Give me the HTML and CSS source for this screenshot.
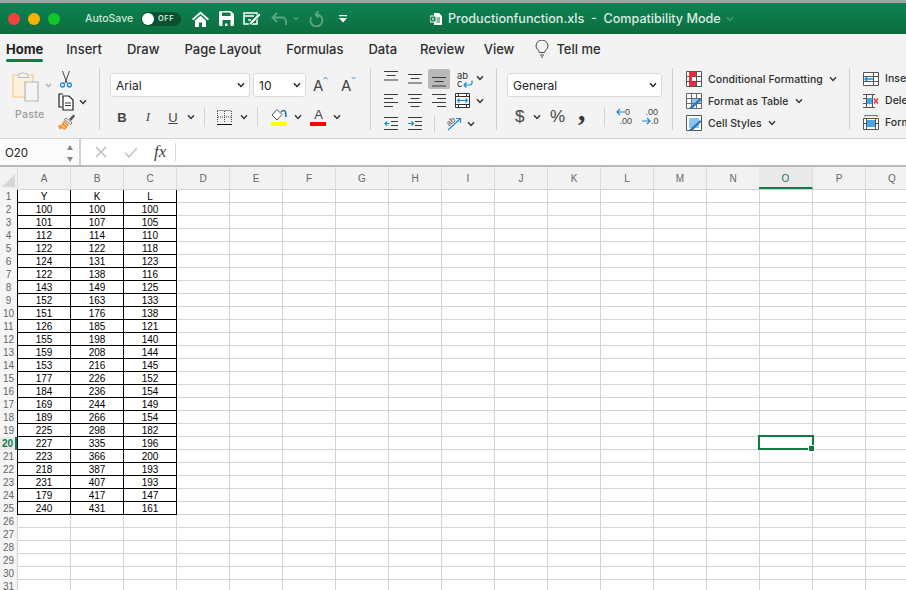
FILE: index.html
```html
<!DOCTYPE html>
<html lang="en">
<head>
<meta charset="utf-8">
<title>Productionfunction.xls</title>
<link rel="stylesheet" href="styles.css">
</head>
<body>
<svg class="defs" width="0" height="0" aria-hidden="true">
  <symbol id="chev" viewBox="0 0 8 6"><path d="M1 1.200 4 4.400 7 1.200" fill="none" stroke="currentColor" stroke-width="1.400"/></symbol>
</svg>
<div class="app">
  <header class="titlebar">
    <div class="lights"><i class="light red"></i><i class="light yellow"></i><i class="light green"></i></div>
    <span class="autosave">AutoSave</span>
    <span class="toggle"><i class="knob"></i><b>OFF</b></span>
    <svg class="qa qa-home" width="17" height="16" viewBox="0 0 17 16"><path d="M8.500 .5 0 8l1.200 1.300L8.500 3l7.300 6.300L17 8ZM3 9.500V16h4v-4.500h3V16h4V9.500L8.500 4.800Z" fill="#fff"/></svg>
    <svg class="qa qa-save" width="15" height="15" viewBox="0 0 15 15"><path fill="#fff" d="M0 1.500A1.500 1.500 0 0 1 1.500 0h10L15 3v10.500A1.500 1.500 0 0 1 13.500 15h-12A1.500 1.500 0 0 1 0 13.500ZM3 1.500V5h8.500V1.500ZM3.500 9v6H6v-2.500h2.500V15h3V9Z"/></svg>
    <svg class="qa qa-edit" width="19" height="15" viewBox="0 0 19 15"><path d="M1 2h13v11H1ZM1 5h10M5 9h3" fill="none" stroke="#fff" stroke-width="1.500"/><path d="M7 11 16 2l2 2-9 9-3 1Z" fill="#fff" stroke="#0c7545" stroke-width=".8"/></svg>
    <svg class="qa qa-undo" width="17" height="14" viewBox="0 0 17 14"><path d="M6 1 1.500 5.500 6 10M2 5.500h9a4 4 0 0 1 4 4V13" fill="none" stroke="#5fa687" stroke-width="1.800"/></svg>
    <svg class="qa qa-chev" width="6" height="5"><use href="#chev" color="#5fa687"/></svg>
    <svg class="qa qa-redo" width="15" height="16" viewBox="0 0 15 16"><path d="M8 3.500a6 6 0 1 1-5.500 2.500M9.500 0 6.500 3.500l3 3" fill="none" stroke="#5fa687" stroke-width="1.800"/></svg>
    <svg class="qa qa-more" width="8" height="8" viewBox="0 0 8 8"><path d="M0 0h8v1.300H0ZM0 3h8L4 7.500Z" fill="#fff"/></svg>
    <div class="doc">
      <svg width="12" height="12" viewBox="0 0 12 12"><path d="M4 0h5l3 3v9H4Z" fill="#fff"/><path d="M6 5h4M6 7h4M6 9h4" stroke="#0c7545"/><rect x="0" y="3" width="6" height="6" fill="#0c7545" stroke="#fff"/><path d="M2 4.500l2 3M4 4.500l-2 3" stroke="#fff" stroke-width=".7"/></svg>
      <span class="docname">Productionfunction.xls&nbsp; -&nbsp; Compatibility Mode</span>
      <svg class="docchev" width="10" height="6"><use href="#chev" color="#4d9a78"/></svg>
    </div>
  </header>

  <nav class="tabs">
    <span class="tab tab-active">Home</span>
    <span class="tab">Insert</span>
    <span class="tab">Draw</span>
    <span class="tab">Page Layout</span>
    <span class="tab">Formulas</span>
    <span class="tab tab-data">Data</span>
    <span class="tab tab-review">Review</span>
    <span class="tab tab-view">View</span>
    <svg class="bulb" width="14" height="18" viewBox="0 0 14 18"><path d="M4.500 12.500C4 10 1 9 1 6a6 6 0 0 1 12 0c0 3-3 4-3.500 6.500ZM5 15h4M6 17h2" fill="none" stroke="#444" stroke-width="1"/></svg>
    <span class="tab tell">Tell me</span>
  </nav>

  <section class="ribbon">
    <div class="group g-clip">
      <div class="paste">
        <div class="paste-top">
          <svg width="28" height="31" viewBox="0 0 28 31"><path d="M1 4h20v22H1Z" fill="#fdf0dc" stroke="#f5d5a3" stroke-width="1.500"/><path d="M7 4V2.500h2.500a2 2 0 0 1 3 0H15V4l2 2.500H6Z" fill="#f2f2f2" stroke="#bdbdbd"/><path d="M13 11h13v19H13Z" fill="#f4f4f4" stroke="#b5b5b5" stroke-width="1.200"/></svg>
          <svg class="paste-chev" width="7" height="5"><use href="#chev" color="#aaa"/></svg>
        </div>
        <span class="paste-label">Paste</span>
      </div>
      <div class="clip-tools">
        <svg class="cut" width="12" height="17" viewBox="0 0 12 17"><path d="M2.500 0l4.500 12M9.500 0 5 12" stroke="#444" fill="none"/><circle cx="2.500" cy="14" r="2" fill="none" stroke="#1b88d8" stroke-width="1.300"/><circle cx="9.500" cy="14" r="2" fill="none" stroke="#1b88d8" stroke-width="1.300"/></svg>
        <div class="copy-row">
          <svg width="16" height="18" viewBox="0 0 16 18"><path d="M5 1H1v13h3" fill="none" stroke="#222" stroke-width="1.200"/><path d="M5 3h6l4 4v10H5Z" fill="#fff" stroke="#222" stroke-width="1.200"/><path d="M7 10h6M7 12.500h6" stroke="#222" stroke-width=".9"/></svg>
          <svg class="chev-dark" width="8" height="6"><use href="#chev"/></svg>
        </div>
        <svg class="painter" width="17" height="17" viewBox="0 0 17 17"><path d="M11 5 15.500 .5 17 2l-4 5Z" fill="#555"/><path d="M8 4l6 5-1.500 1.500-6-5Z" fill="#fff" stroke="#555" stroke-width=".8"/><path d="M6 6l5 5-4 5-3-1.500L1 15l-1-4 3 .5Z" fill="#f79433"/><path d="M4 12l3 2M6 9l3 3" stroke="#fff" stroke-width=".9"/></svg>
      </div>
    </div>

    <div class="group g-font">
      <div class="row row-sel">
        <div class="selectbox sel-font"><span>Arial</span><svg width="8" height="6"><use href="#chev"/></svg></div>
        <div class="selectbox sel-size"><span>10</span><svg width="8" height="6"><use href="#chev"/></svg></div>
        <span class="grow">A<svg width="5" height="4" viewBox="0 0 8 6"><path d="M1 5 4 1.500 7 5" fill="none" stroke="#1b88d8" stroke-width="1.400"/></svg></span>
        <span class="shrink">A<svg width="5" height="4"><use href="#chev" color="#1b88d8"/></svg></span>
      </div>
      <div class="row row-fmt">
        <b class="fmt f-b">B</b>
        <i class="fmt f-i">I</i>
        <u class="fmt f-u">U</u>
        <svg class="chev-dark c-u" width="8" height="6"><use href="#chev"/></svg>
        <span class="vr v1"></span>
        <svg class="borders" width="15" height="15" viewBox="0 0 15 15"><path d="M.5.500h14M.5 1v12M14.500 1v12M7.500 1v12M1 7h13" stroke="#444" stroke-dasharray="1 1" fill="none"/><path d="M0 14.500h15" stroke="#111"/></svg>
        <svg class="chev-dark c-b" width="8" height="6"><use href="#chev"/></svg>
        <span class="vr v2"></span>
        <span class="colorbtn cb-fill">
          <svg width="16" height="12" viewBox="0 0 16 12"><path d="M6 .5 1 6l5 5 5-5.500Z" fill="#fff" stroke="#555"/><path d="M10 3q3-3 4.500 0l.5 5" fill="none" stroke="#1b6fc2" stroke-width="1.600"/></svg>
          <i class="swatch yellow-s"></i>
        </span>
        <svg class="chev-dark c-f" width="8" height="6"><use href="#chev"/></svg>
        <span class="colorbtn cb-font">
          <span class="a-letter">A</span>
          <i class="swatch red-s"></i>
        </span>
        <svg class="chev-dark c-c" width="8" height="6"><use href="#chev"/></svg>
      </div>
    </div>

    <div class="group g-align">
      <div class="row a-row1">
        <svg class="al-top" width="14" height="10" viewBox="0 0 14 10"><path d="M0 .5h14M2.500 4.500h9M0 9h14" stroke="#3c3c3c"/></svg>
        <svg class="al-mid ml10" width="14" height="10" viewBox="0 0 14 10"><path d="M0 .5h14M2.500 4.500h9M0 9h14" stroke="#3c3c3c"/></svg>
        <span class="a-active"><svg width="14" height="10" viewBox="0 0 14 10"><path d="M0 .5h14M2.500 4.500h9M0 9h14" stroke="#3c3c3c"/></svg></span>
        <span class="wrap-ab">ab<br>c<svg width="11" height="8" viewBox="0 0 11 8"><path d="M10 .5V3a2 2 0 0 1-2 2H2M4.500 2.500 2 5l2.500 2.500" fill="none" stroke="#1b88d8" stroke-width="1.200"/></svg></span>
        <svg class="chev-dark a-chev" width="8" height="6"><use href="#chev"/></svg>
      </div>
      <div class="row a-row2">
        <svg width="14" height="13" viewBox="0 0 14 13"><path d="M0 .5h14M0 4.500h9M0 8.500h14M0 12.500h9" stroke="#3c3c3c"/></svg>
        <svg class="ml10" width="14" height="13" viewBox="0 0 14 13"><path d="M0 .5h14M2.500 4.500h9M0 8.500h14M2.500 12.500h9" stroke="#3c3c3c"/></svg>
        <svg class="ml10" width="14" height="13" viewBox="0 0 14 13"><path d="M0 .5h14M5 4.500h9M0 8.500h14M5 12.500h9" stroke="#3c3c3c"/></svg>
        <svg class="merge" width="15" height="15" viewBox="0 0 15 15"><path d="M.5.500h14v14H.5ZM.5 3.500h14M.5 11.500h14M3.500.5v3M11.500.5v3M3.500 11.500v3M11.500 11.500v3" fill="#fff" stroke="#333"/><path d="M2 7.500h11M4.500 5.500l-2 2 2 2M10.500 5.500l2 2-2 2" fill="none" stroke="#1b88d8" stroke-width="1.200"/></svg>
        <svg class="chev-dark ml6" width="8" height="6"><use href="#chev"/></svg>
      </div>
      <div class="row a-row3">
        <svg width="14" height="13" viewBox="0 0 14 13"><path d="M0 .5h14M7 4.500h7M7 8.500h7M0 12.500h14" stroke="#3c3c3c"/><path d="M5.500 6.500H1M3 4.500l-2 2 2 2" fill="none" stroke="#1b88d8" stroke-width="1.200"/></svg>
        <svg class="ml10" width="14" height="13" viewBox="0 0 14 13"><path d="M0 .5h14M7 4.500h7M7 8.500h7M0 12.500h14" stroke="#3c3c3c"/><path d="M0 6.500h5M3.500 4.500l2 2-2 2" fill="none" stroke="#1b88d8" stroke-width="1.200"/></svg>
        <span class="vr v3"></span>
        <svg class="orient-icon" width="15" height="15" viewBox="0 0 15 15"><path d="M2 14 14 3M10 2.500h4.500V7" fill="none" stroke="#1b88d8" stroke-width="1.100"/><text x="1" y="9" transform="rotate(-40 4 7)" class="orient">ab</text></svg>
        <svg class="chev-dark ml6" width="8" height="6"><use href="#chev"/></svg>
      </div>
    </div>

    <div class="group g-num">
      <div class="row row-sel">
        <div class="selectbox sel-num"><span>General</span><svg width="8" height="6"><use href="#chev"/></svg></div>
      </div>
      <div class="row row-numfmt">
        <span class="dollar">$</span>
        <svg class="chev-dark n-c" width="8" height="6"><use href="#chev"/></svg>
        <span class="percent">%</span>
        <span class="comma">,</span>
        <span class="vr v4"></span>
        <span class="dec dec-inc"><svg width="9" height="8" viewBox="0 0 9 8"><path d="M9 4H1M4 1 1 4l3 3" fill="none" stroke="#1b88d8" stroke-width="1.200"/></svg><em class="d1">0</em><em class="d2">.00</em></span>
        <span class="dec dec-dec"><em class="d3">.00</em><svg width="9" height="8" viewBox="0 0 9 8"><path d="M0 4h8M5 1l3 3-3 3" fill="none" stroke="#1b88d8" stroke-width="1.200"/></svg><em class="d4">.0</em></span>
      </div>
    </div>

    <div class="group g-styles">
      <div class="style-row">
        <svg width="16" height="16" viewBox="0 0 16 16"><path d="M.5.500h15v15H.5ZM5.500.5v15M10.500.5v15M.5 5.500h15M.5 10.500h15" fill="#fff" stroke="#555"/><path d="M3 1h7v4H6v6h4v4H3Z" fill="#ee2b3b"/></svg>
        <span>Conditional Formatting</span><svg class="chev-dark" width="8" height="6"><use href="#chev"/></svg>
      </div>
      <div class="style-row">
        <svg width="16" height="16" viewBox="0 0 16 16"><path d="M.5.500h15v15H.5ZM5.500.5v15M10.500.5v15M.5 5.500h15M.5 10.500h15" fill="#fff" stroke="#666"/><path d="M6 6h9v4H6Z" fill="#8cc4f0"/><path d="M3 15 14 5l1.500 1.500L6 16Z" fill="#2f77b8"/></svg>
        <span>Format as Table</span><svg class="chev-dark" width="8" height="6"><use href="#chev"/></svg>
      </div>
      <div class="style-row">
        <svg width="16" height="16" viewBox="0 0 16 16"><path d="M.5.500h15v15H.5Z" fill="#fff" stroke="#555"/><path d="M3 3h10v10H3Z" fill="#8cc4f0"/><path d="M3 15 14 5l1.500 1.500L6 16Z" fill="#2f77b8"/></svg>
        <span>Cell Styles</span><svg class="chev-dark" width="8" height="6"><use href="#chev"/></svg>
      </div>
    </div>

    <div class="group g-cells">
      <div class="style-row">
        <svg width="16" height="14" viewBox="0 0 16 14"><path d="M.5.500h15v13H.5ZM.5 4.500h15M.5 9.500h15M10.500.5v13" fill="#fff" stroke="#555"/><path d="M11 7H2M5 4 2 7l3 3" fill="none" stroke="#1b88d8" stroke-width="1.300"/></svg>
        <span>Insert</span>
      </div>
      <div class="style-row">
        <svg width="16" height="14" viewBox="0 0 16 14"><path d="M3.500.5v13M9.500.5v13M0 .5h12M0 13.500h12M0 4.500h3M0 9.500h3" fill="none" stroke="#555"/><path d="M4 4h5v6H4Z" fill="#47a3e8"/><path d="M11 4.500l4 5M15 4.500l-4 5" stroke="#ee2b3b" stroke-width="1.300"/></svg>
        <span>Delete</span>
      </div>
      <div class="style-row">
        <svg width="16" height="15" viewBox="0 0 16 15"><path d="M.5 3.500h15v11H.5ZM3.500 3.500v11M12.500 3.500v11M.5 8.500h15" fill="#fff" stroke="#555"/><path d="M4 5h8v7H4Z" fill="#47a3e8"/><path d="M2 .5h12M2 0v2M14 0v2" stroke="#1b88d8"/></svg>
        <span>Format</span>
      </div>
    </div>
  </section>

  <section class="formula">
    <div class="namebox">
      <span>O20</span>
      <span class="stepper"><i class="step-up"></i><i class="step-down"></i></span>
    </div>
    <div class="fx-tools">
      <svg class="fx-x" width="12" height="12" viewBox="0 0 12 12"><path d="M1 1l10 10M11 1 1 11" stroke="#c9c9c9" stroke-width="1.800"/></svg>
      <svg class="fx-check" width="14" height="11" viewBox="0 0 14 11"><path d="M1 5.500 5 10 13 1" fill="none" stroke="#c9c9c9" stroke-width="1.800"/></svg>
      <span class="fx">fx</span>
    </div>
    <div class="fx-input"></div>
  </section>

  <div class="colheads">
    <div class="corner"><i></i></div>
    <span class="ch">A</span><span class="ch">B</span><span class="ch">C</span><span class="ch">D</span><span class="ch">E</span><span class="ch">F</span><span class="ch">G</span><span class="ch">H</span><span class="ch">I</span><span class="ch">J</span><span class="ch">K</span><span class="ch">L</span><span class="ch">M</span><span class="ch">N</span><span class="ch ch-sel">O</span><span class="ch">P</span><span class="ch">Q</span>
  </div>

  <main class="sheet">
    <div class="rowheads">
      <span>1</span><span>2</span><span>3</span><span>4</span><span>5</span><span>6</span><span>7</span><span>8</span><span>9</span><span>10</span><span>11</span><span>12</span><span>13</span><span>14</span><span>15</span><span>16</span><span>17</span><span>18</span><span>19</span><span class="rh-sel">20</span><span>21</span><span>22</span><span>23</span><span>24</span><span>25</span><span>26</span><span>27</span><span>28</span><span>29</span><span>30</span><span>31</span>
    </div>
    <div class="cells">
      <table class="data">
        <tr><td>Y</td><td>K</td><td>L</td></tr>
        <tr><td>100</td><td>100</td><td>100</td></tr>
        <tr><td>101</td><td>107</td><td>105</td></tr>
        <tr><td>112</td><td>114</td><td>110</td></tr>
        <tr><td>122</td><td>122</td><td>118</td></tr>
        <tr><td>124</td><td>131</td><td>123</td></tr>
        <tr><td>122</td><td>138</td><td>116</td></tr>
        <tr><td>143</td><td>149</td><td>125</td></tr>
        <tr><td>152</td><td>163</td><td>133</td></tr>
        <tr><td>151</td><td>176</td><td>138</td></tr>
        <tr><td>126</td><td>185</td><td>121</td></tr>
        <tr><td>155</td><td>198</td><td>140</td></tr>
        <tr><td>159</td><td>208</td><td>144</td></tr>
        <tr><td>153</td><td>216</td><td>145</td></tr>
        <tr><td>177</td><td>226</td><td>152</td></tr>
        <tr><td>184</td><td>236</td><td>154</td></tr>
        <tr><td>169</td><td>244</td><td>149</td></tr>
        <tr><td>189</td><td>266</td><td>154</td></tr>
        <tr><td>225</td><td>298</td><td>182</td></tr>
        <tr><td>227</td><td>335</td><td>196</td></tr>
        <tr><td>223</td><td>366</td><td>200</td></tr>
        <tr><td>218</td><td>387</td><td>193</td></tr>
        <tr><td>231</td><td>407</td><td>193</td></tr>
        <tr><td>179</td><td>417</td><td>147</td></tr>
        <tr><td>240</td><td>431</td><td>161</td></tr>
      </table>
      <div class="selection"><i></i></div>
    </div>
  </main>
</div>
</body>
</html>
```
FILE: styles.css
```css
* { box-sizing: border-box; }
html, body { margin: 0; height: 100%; overflow: hidden; background: #fff; }
body { font-family: Inter, "Liberation Sans", sans-serif; color: #2a2a2a; }
.defs { position: absolute; }
svg { display: block; flex: none; }
em { font-style: normal; }
.app { width: 906px; height: 590px; display: flex; flex-direction: column; overflow: hidden; }

/* Title bar */
.titlebar { height: 34px; flex: none; display: flex; align-items: center; padding-left: 8px; border-top: 3px solid #a4a4a4; background: linear-gradient(#0b8453, #0f6c3f); color: #fff; }
.lights { display: flex; gap: 8px; }
.light { width: 12px; height: 12px; border-radius: 50%; }
.light.red { background: #f2413d; }
.light.yellow { background: #fbb202; }
.light.green { background: #13c72b; }
.autosave { margin-left: 25px; width: 56px; font-size: 10.500px; font-weight: 500; color: #cfe5da; }
.toggle { width: 40px; height: 14px; border-radius: 7px; background: #0b5131; display: flex; align-items: center; padding-left: 1px; }
.toggle .knob { width: 12px; height: 12px; border-radius: 50%; background: #fff; }
.toggle b { font-size: 7.500px; font-weight: 600; margin-left: 4px; color: #d8e8e0; letter-spacing: .5px; }
.qa-home { margin-left: 11px; }
.qa-save { margin-left: 10px; }
.qa-edit { margin-left: 9px; }
.qa-undo { margin-left: 9px; }
.qa-chev { margin-left: 5px; }
.qa-redo { margin-left: 10px; }
.qa-more { margin-left: 15px; }
.doc { display: flex; align-items: center; margin-left: 83px; }
.docname { margin-left: 6px; font-size: 12.600px; font-weight: 500; color: #dcebe4; white-space: nowrap; }
.docchev { margin-left: 4px; }

/* Tabs */
.tabs { height: 28px; flex: none; display: flex; align-items: center; padding: 2px 0 0 6px; background: #f3f3f3; }
.tab { font-size: 13px; font-weight: 500; color: #2e2e2e; margin-right: 25px; position: relative; white-space: nowrap; height: 26px; line-height: 26px; }
.tab-active { font-weight: 700; margin-right: 23px; color: #1f1f1f; }
.tab-active::after { content: ""; position: absolute; left: 0; right: 0; bottom: 0; height: 3px; border-radius: 2px; background: #107c41; }
.tab-data { margin-right: 23px; }
.tab-review { margin-right: 19px; }
.tab-view { margin-right: 22px; }
.bulb { margin-left: -1px; }
.tell { margin-left: 7px; margin-right: 0; }

/* Ribbon */
.ribbon { height: 77px; flex: none; display: flex; background: #f3f3f3; border-bottom: 1px solid #d4d4d4; padding-top: 6px; overflow: hidden; }
.group { height: 62px; border-right: 1px solid #cfcfcf; flex: none; }
.row { display: flex; align-items: center; }
.vr { width: 1px; height: 20px; background: #d4d4d4; flex: none; }

.g-clip { width: 100px; display: flex; }
.paste { width: 58px; padding: 3px 0 0 12px; }
.paste-top { display: flex; align-items: center; }
.paste-chev { margin-left: 5px; margin-top: -2px; }
.paste-label { display: block; margin: 6px 0 0 3px; font-size: 10.500px; font-weight: 500; color: #9b9b9b; letter-spacing: .3px; }
.clip-tools { display: flex; flex-direction: column; }
.cut { margin: 3px 0 0 2px; }
.copy-row { display: flex; align-items: center; margin-top: 5px; }
.copy-row .chev-dark { margin-left: 5px; }
.painter { margin-top: 3px; }
.chev-dark { color: #333; }

.g-font { width: 271px; padding-left: 10px; }
.row-sel { height: 24px; margin-top: 5px; }
.selectbox { height: 24px; background: #fff; border: 1px solid #dadada; border-radius: 3px; display: flex; align-items: center; justify-content: space-between; padding: 0 4px 0 5px; font-size: 12px; color: #222; }
.sel-font { width: 140px; }
.sel-size { width: 53px; margin-left: 3px; }
.sel-num { width: 155px; }
.grow, .shrink { display: flex; font-size: 15px; color: #444; font-weight: 400; }
.grow { margin-left: 7px; width: 28px; }
.shrink { width: 18px; }
.row-fmt { height: 20px; margin-top: 10px; font-family: "Liberation Sans", sans-serif; color: #444; }
.fmt { font-size: 13px; width: 10px; text-align: center; flex: none; font-family: "Liberation Sans", sans-serif; }
.f-b { margin-left: 7px; }
.f-i { margin-left: 16px; font-family: "Liberation Serif", serif; }
.f-u { margin-left: 15px; }
.c-u { margin-left: 9px; }
.v1 { margin-left: 9px; }
.borders { margin-left: 12px; }
.c-b { margin-left: 8px; }
.v2 { margin-left: 9px; }
.colorbtn { width: 17px; flex: none; display: block; }
.cb-fill { margin-left: 13px; }
.c-f { margin-left: 6px; }
.cb-font { margin-left: 8px; }
.c-c { margin-left: 6px; }
.swatch { display: block; height: 4px; width: 16px; margin-top: 1px; }
.yellow-s { background: #ffff00; }
.red-s { background: #ff0000; }
.a-letter { display: block; text-align: center; font-size: 13px; line-height: 12px; color: #444; }

.g-align { width: 126px; padding-left: 13px; }
.a-row1 { height: 20px; margin-top: 1px; align-items: flex-start; }
.al-top { margin-top: 2px; }
.al-mid { margin-top: 5px; }
.ml10 { margin-left: 10px; }
.ml6 { margin-left: 6px; }
.a-active { width: 22px; height: 20px; margin-left: 6px; border-radius: 2px; background: #b9b9b9; display: flex; align-items: flex-end; justify-content: center; padding-bottom: 2px; }
.wrap-ab { margin: 3px 0 0 7px; width: 19px; font-size: 9.500px; line-height: 8px; color: #333; }
.wrap-ab svg { display: inline-block; vertical-align: -1px; }
.a-chev { margin: 6px 0 0 0; }
.a-row2 { height: 15px; margin-top: 4px; }
.merge { margin-left: 9px; }
.a-row3 { height: 15px; margin-top: 8px; }
.v3 { margin-left: 12px; height: 18px; }
.orient-icon { margin-left: 11px; overflow: visible; }
.orient { font-size: 8px; fill: #444; font-family: "Liberation Sans", sans-serif; }

.g-num { width: 176px; padding-left: 10px; }
.row-numfmt { height: 20px; margin-top: 10px; font-family: "Liberation Sans", sans-serif; color: #444; }
.dollar { width: 9px; margin-left: 8px; font-size: 17px; }
.n-c { margin-left: 9px; }
.percent { margin-left: 9px; font-size: 17px; width: 15px; }
.comma { margin-left: 13px; width: 10px; font-size: 30px; font-weight: 700; line-height: 14px; color: #333; margin-top: -14px; font-family: "Liberation Serif", serif; }
.v4 { margin-left: 16px; }
.dec { width: 16px; height: 18px; flex: none; display: grid; font-size: 9px; line-height: 9px; }
.dec-inc { margin-left: 11px; grid-template-columns: 9px 7px; }
.dec-dec { margin-left: 10px; grid-template-columns: 9px 7px; }
.d2, .d3 { grid-column: 1 / 3; text-align: right; }
.d4 { text-align: left; }

.g-styles { width: 177px; padding: 3px 0 0 13px; display: flex; flex-direction: column; gap: 6px; }
.style-row { height: 16px; display: flex; align-items: center; font-size: 10.500px; font-weight: 500; letter-spacing: .05px; color: #2e2e2e; white-space: nowrap; }
.style-row > span { margin-left: 6px; }
.style-row .chev-dark { margin-left: 6px; }
.g-cells { flex: 1; border-right: 0; padding: 3px 0 0 13px; display: flex; flex-direction: column; gap: 6px; }

/* Formula bar */
.formula { height: 28px; flex: none; display: flex; background: #fff; border-bottom: 2px solid #b9b9b9; }
.namebox { width: 81px; border-right: 2px solid #d2d2d2; display: flex; align-items: center; justify-content: space-between; padding: 2px 6px 0 5px; font-size: 11.500px; color: #222; background: #fbfbfb; }
.stepper { display: flex; flex-direction: column; gap: 7px; }
.step-up, .step-down { width: 0; height: 0; border-left: 3.500px solid transparent; border-right: 3.500px solid transparent; }
.step-up { border-bottom: 5px solid #888; }
.step-down { border-top: 5px solid #888; }
.fx-tools { width: 95px; display: flex; align-items: center; border-right: 1px solid #dcdcdc; margin: 4px 0; background: #fff; }
.fx-x { margin-left: 14px; }
.fx-check { margin-left: 17px; }
.fx { margin-left: 16px; font: italic 17px "Liberation Serif", serif; color: #444; }
.fx-input { flex: 1; }

/* Headers */
.colheads { height: 22px; flex: none; display: flex; background: #f2f2f2; }
.corner { width: 18px; flex: none; border-right: 1px solid #dcdcdc; display: flex; align-items: flex-end; justify-content: flex-end; padding: 0 2px 2px 0; }
.corner i { width: 0; height: 0; border-left: 13px solid transparent; border-bottom: 13px solid #d6d6d6; }
.ch { width: 53px; flex: none; border-right: 1px solid #dcdcdc; text-align: center; padding-top: 1px; font: 10px/21px "Liberation Sans", sans-serif; color: #666; }
.ch-sel { background: #e9e9e9; color: #107c41; border-bottom: 2px solid #107c41; margin-left: -1px; width: 54px; }

.sheet { flex: 1; display: flex; min-height: 0; overflow: hidden; }
.rowheads { width: 17px; flex: none; background: #f5f5f5; display: flex; flex-direction: column; padding-top: 1px; }
.rowheads span { height: 13px; flex: none; padding-top: 1px; font: 10px/12px "Liberation Sans", sans-serif; color: #666; text-align: center; }
.rowheads .rh-sel { color: #107c41; font-weight: 700; background: #e9e9e9; border-right: 2px solid #107c41; }
.cells { flex: 1; position: relative; padding-top: 1px;
  background-image: linear-gradient(90deg, #d4d4d4 1px, transparent 1px), linear-gradient(#d4d4d4 1px, transparent 1px);
  background-size: 53px 13px; }
.data { border-collapse: separate; border-spacing: 0; table-layout: fixed; width: 160px; font: 10px/11px "Liberation Sans", sans-serif; color: #000; }
.data td { padding: 1px 0 0; width: 53px; height: 13px; text-align: center; border-right: 1px solid #000; border-bottom: 1px solid #000; }
.data td:first-child { width: 54px; border-left: 1px solid #000; }
.selection { position: absolute; left: 741px; top: 246px; width: 56px; height: 15px; border: 2px solid #107c41; }
.selection i { position: absolute; right: -3px; bottom: -4px; width: 7px; height: 7px; background: #107c41; border: 1px solid #fff; }
```
